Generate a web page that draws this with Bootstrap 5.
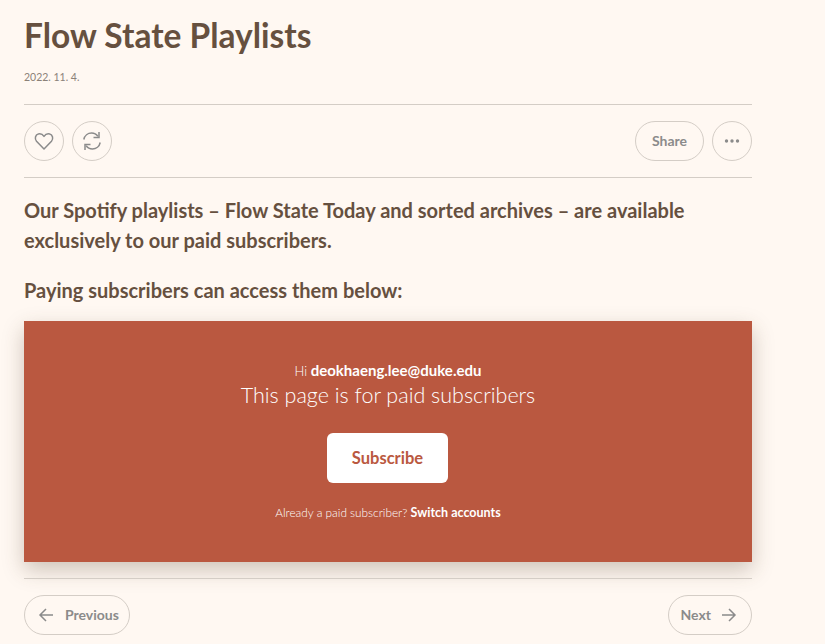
<!doctype html>
<html lang="en"><head><meta charset="utf-8"><title>Flow State Playlists</title>
<link href="https://cdn.jsdelivr.net/npm/bootstrap@5.3.0/dist/css/bootstrap.min.css" rel="stylesheet">
<style>
html,body{background:#fff8f2;height:644px;overflow:hidden}
body{font-family:Lato,"Open Sans",sans-serif;color:#66503f}
.post-wrap{width:728px;margin-left:24px;padding-top:13px}
.post-title{font-size:33.500px;line-height:44px;font-weight:700;color:#66503f;margin:0}
.post-date{font-size:10.500px;line-height:16px;color:#8b8178;margin:12px 0 0}
.rule-line{border-top:1px solid #d4cdc6;opacity:1;margin:0}
.rule-first{margin-top:19px}
.tool-row{height:72px}
.round-btn{height:40px;min-width:40px;border:1px solid #d4cdc6;border-radius:20px;background:transparent;color:#8b8b8b;font-size:14px;font-weight:700;padding:0}
.round-btn svg{display:block}
.round-btn .btn-label{margin-bottom:2px}
.prev-btn{padding:0 10px 0 13px;gap:11px}
.next-btn{padding:0 14px 0 12px;gap:10px}
.body-copy{font-size:20px;line-height:30px;font-weight:700;color:#66503f;margin-top:17px}
.body-copy p{margin:0 0 20px}
.pay-panel{background:#ba5840;height:241px;box-shadow:0 8px 20px rgba(80,60,40,.28);color:#fff;padding-top:40px;margin-top:-4px}
.hi-line{font-size:13px;line-height:18px;font-weight:300}
.hi-line .strong-white{font-size:15px}
.pay-head{font-size:21.500px;line-height:30px;font-weight:300}
.sub-btn{display:block;width:121px;height:50px;margin:23px auto 0;background:#fff;color:#ba5840;border:0;border-radius:6px;font-size:16.500px;font-weight:700;position:relative;left:-.5px}
.switch-line{font-size:11.800px;line-height:18px;font-weight:300;margin-top:21px}
.switch-line .strong-white{font-size:12.500px}
.strong-white{font-weight:700}
</style></head><body>
<main class="post-wrap">
<h1 class="post-title">Flow State Playlists</h1>
<p class="post-date">2022. 11. 4.</p>
<hr class="rule-line rule-first">
<div class="tool-row d-flex align-items-center justify-content-between">
 <div class="d-flex gap-2">
  <button class="round-btn d-flex align-items-center justify-content-center" aria-label="Like"><svg width="20" height="20" viewBox="0 0 20 20" fill="none" stroke="currentColor" stroke-width="1.5" stroke-linejoin="round"><path d="M10 18 2.500 10.200C.4 7.800 1.200 3.800 4.400 2.900c2.100-.5 4.200.4 5.600 2.500 1.400-2.100 3.500-3 5.600-2.500 3.200.9 4 4.900 1.900 7.300z"/></svg></button>
  <button class="round-btn d-flex align-items-center justify-content-center" aria-label="Restack"><svg width="20" height="20" viewBox="0 0 20 20" fill="none" stroke="currentColor" stroke-width="1.5"><path d="M1.800 8.500C2.600 4.500 5.900 2 9.600 2c2.600 0 4.900 1.300 6.300 3.400M18.200 11.500c-.8 4-4.100 6.500-7.800 6.500-2.600 0-4.900-1.300-6.300-3.400"/><path d="M17 1v5.500h-5.500M3 19v-5.500h5.500"/></svg></button>
 </div>
 <div class="d-flex gap-2">
  <button class="round-btn d-flex align-items-center px-3"><span class="btn-label">Share</span></button>
  <button class="round-btn d-flex align-items-center justify-content-center" aria-label="More"><svg width="16" height="4" viewBox="0 0 16 4" fill="currentColor"><circle cx="2.500" cy="2" r="1.700"/><circle cx="8" cy="2" r="1.700"/><circle cx="13.500" cy="2" r="1.700"/></svg></button>
 </div>
</div>
<hr class="rule-line">
<div class="body-copy">
 <p>Our Spotify playlists – Flow State Today and sorted archives – are available exclusively to our paid subscribers.</p>
 <p>Paying subscribers can access them below:</p>
</div>
<section class="pay-panel text-center">
 <div class="hi-line">Hi <span class="strong-white">deokhaeng.lee@duke.edu</span></div>
 <div class="pay-head">This page is for paid subscribers</div>
 <button class="sub-btn">Subscribe</button>
 <div class="switch-line">Already a paid subscriber? <span class="strong-white">Switch accounts</span></div>
</section>
<hr class="rule-line mt-3">
<div class="d-flex justify-content-between mt-3">
 <button class="round-btn prev-btn d-flex align-items-center"><svg width="16" height="16" viewBox="0 0 16 16" fill="none" stroke="currentColor" stroke-width="1.500"><path d="M15 8H2M8 2 2 8l6 6"/></svg><span class="btn-label">Previous</span></button>
 <button class="round-btn next-btn d-flex align-items-center"><span class="btn-label">Next</span><svg width="16" height="16" viewBox="0 0 16 16" fill="none" stroke="currentColor" stroke-width="1.500"><path d="M1 8h13M8 2l6 6-6 6"/></svg></button>
</div>
</main>
<script src="https://cdn.jsdelivr.net/npm/bootstrap@5.3.0/dist/js/bootstrap.bundle.min.js"></script>
</body></html>
